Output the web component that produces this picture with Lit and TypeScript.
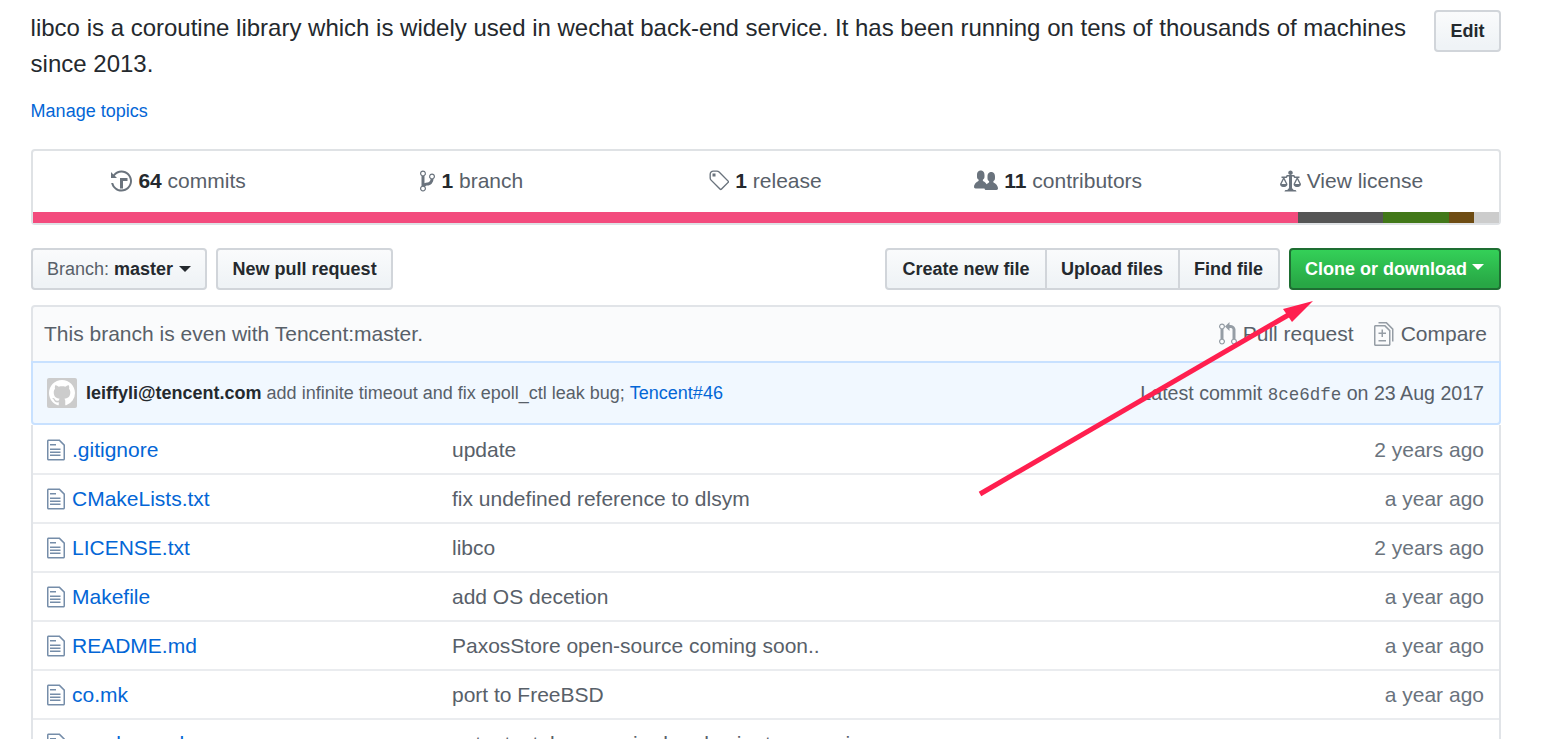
import { LitElement, html, css, svg } from 'lit'
import { customElement } from 'lit/decorators.js'

const octicon = (vb: string, w: number, h: number, d: string, cls = 'ic') =>
	html`<svg class=${cls} viewBox=${vb} width=${w} height=${h} aria-hidden="true"><path fill-rule="evenodd" d=${d} /></svg>`

const HISTORY = 'M8 13H6V6h5v2H8v5zM7 1C4.81 1 2.87 2.02 1.59 3.59L0 2v4h4L2.5 4.5C3.55 3.17 5.17 2.3 7 2.3c3.14 0 5.7 2.56 5.7 5.7s-2.56 5.7-5.7 5.7A5.71 5.71 0 0 1 1.45 9.3H.12C.75 12.55 3.6 15 7 15c3.86 0 7-3.14 7-7s-3.14-7-7-7z'
const BRANCH = 'M10 5c0-1.11-.89-2-2-2a1.993 1.993 0 0 0-1 3.72v.3c-.02.52-.23.98-.63 1.38-.4.4-.86.61-1.38.63-.83.02-1.48.16-2 .45V4.72a1.993 1.993 0 0 0-1-3.72C.88 1 0 1.89 0 3a2 2 0 0 0 1 1.72v6.56c-.59.35-1 .99-1 1.72 0 1.11.89 2 2 2 1.11 0 2-.89 2-2 0-.53-.2-1-.53-1.36.09-.06.48-.41.59-.47.25-.11.56-.17.94-.17 1.05-.05 1.95-.45 2.75-1.25S8.95 7.77 9 6.73h-.02C9.59 6.37 10 5.73 10 5zM2 1.8c.66 0 1.2.55 1.2 1.2 0 .65-.55 1.2-1.2 1.2C1.35 4.2.8 3.65.8 3c0-.65.55-1.2 1.2-1.2zm0 12.41c-.66 0-1.2-.55-1.2-1.2 0-.65.55-1.2 1.2-1.2.65 0 1.2.55 1.2 1.2 0 .65-.55 1.2-1.2 1.2zm6-8c-.66 0-1.2-.55-1.2-1.2 0-.65.55-1.2 1.2-1.2.65 0 1.2.55 1.2 1.2 0 .65-.55 1.2-1.2 1.2z'
const TAG = 'M7.73 1.73C7.26 1.26 6.62 1 5.96 1H3.5C2.13 1 1 2.13 1 3.5v2.47c0 .66.27 1.3.73 1.77l6.06 6.06c.39.39 1.02.39 1.41 0l4.59-4.59a.996.996 0 0 0 0-1.41L7.73 1.73zM2.38 7.09c-.31-.3-.47-.7-.47-1.13V3.5c0-.88.72-1.59 1.59-1.59h2.47c.42 0 .83.16 1.13.47l6.14 6.13-4.73 4.73-6.13-6.15zM3.01 3h2v2H3V3h.01z'
const PEOPLE = 'M16 12.999c0 .439-.45 1-1 1H7.995c-.539 0-.994-.447-.995-.999H1c-.54 0-1-.561-1-1 0-2.634 3-4 3-4s.229-.409 0-1c-.841-.621-1.058-.59-1-3 .058-2.419 1.367-3 2.5-3s2.442.58 2.5 3c.058 2.41-.159 2.379-1 3-.229.59 0 1 0 1s1.549.711 2.42 2.088C9.196 9.369 10 8.999 10 8.999s.229-.409 0-1c-.841-.62-1.058-.59-1-3 .058-2.419 1.367-3 2.5-3s2.437.581 2.495 3c.059 2.41-.158 2.38-1 3-.229.59 0 1 0 1s3.005 1.366 3.005 4z'
const LAW = 'M7 4c-.83 0-1.5-.67-1.5-1.5S6.17 1 7 1s1.5.67 1.5 1.5S7.83 4 7 4zm7 6c0 1.11-.89 2-2 2h-1c-1.11 0-2-.89-2-2l2-4h-1c-.55 0-1-.45-1-1H8v8c.42 0 1 .45 1 1h1c.42 0 1 .45 1 1H3c0-.55.58-1 1-1h1c0-.55.58-1 1-1h.03L6 5H5c0 .55-.45 1-1 1H3l2 4c0 1.11-.89 2-2 2H2c-1.11 0-2-.89-2-2l2-4H1V5h3c0-.55.45-1 1-1h4c.55 0 1 .45 1 1h3v1h-1l2 4zM2.5 7L1 10h3L2.5 7zM13 10l-1.5-3-1.5 3h3z'
const PR = 'M11 11.28V5c-.03-.78-.34-1.47-.94-2.06C9.46 2.35 8.78 2.03 8 2H7V0L4 3l3 3V4h1c.27.02.48.11.69.31.21.2.3.42.31.69v6.28A1.993 1.993 0 0 0 10 15a1.993 1.993 0 0 0 1-3.72zm-1 2.92c-.66 0-1.2-.55-1.2-1.2 0-.65.55-1.2 1.2-1.2.65 0 1.2.55 1.2 1.2 0 .65-.55 1.2-1.2 1.2zM4 3c0-1.11-.89-2-2-2a1.993 1.993 0 0 0-1 3.72v6.56A1.993 1.993 0 0 0 2 15a1.993 1.993 0 0 0 1-3.72V4.72c.59-.34 1-.98 1-1.72zm-.8 10c0 .66-.55 1.2-1.2 1.2-.65 0-1.2-.55-1.2-1.2 0-.65.55-1.2 1.2-1.2.65 0 1.2.55 1.2 1.2zM2 4.2C1.34 4.2.8 3.65.8 3c0-.65.55-1.2 1.2-1.2.65 0 1.2.55 1.2 1.2 0 .65-.55 1.2-1.2 1.2z'
const DIFF = 'M6 7h2v1H6v2H5V8H3V7h2V5h1v2zm-3 6h5v-1H3v1zM7.5 2L11 5.5V15c0 .55-.45 1-1 1H1c-.55 0-1-.45-1-1V3c0-.55.45-1 1-1h6.5zM10 6L7 3H1v12h9V6zM8.5 0H3v1h5l4 4v8h1V4.5L8.5 0z'
const FILE = 'M6 5H2V4h4v1zM2 8h7V7H2v1zm0 2h7V9H2v1zm0 2h7v-1H2v1zm10-7.5V14c0 .55-.45 1-1 1H1c-.55 0-1-.45-1-1V2c0-.55.45-1 1-1h7.5L12 4.5zM11 5L8 2H1v12h10V5z'
const MARK = 'M8 0C3.58 0 0 3.58 0 8c0 3.54 2.29 6.53 5.47 7.59.4.07.55-.17.55-.38 0-.19-.01-.82-.01-1.49-2.01.37-2.53-.49-2.69-.94-.09-.23-.48-.94-.82-1.13-.28-.15-.68-.52-.01-.53.63-.01 1.08.58 1.23.82.72 1.21 1.87.87 2.33.66.07-.52.28-.87.51-1.07-1.78-.2-3.64-.89-3.64-3.95 0-.87.31-1.59.82-2.15-.08-.2-.36-1.02.08-2.12 0 0 .67-.21 2.2.82.64-.18 1.32-.27 2-.27.68 0 1.36.09 2 .27 1.53-1.04 2.2-.82 2.2-.82.44 1.1.16 1.92.08 2.12.51.56.82 1.27.82 2.15 0 3.07-1.87 3.75-3.65 3.95.29.25.54.73.54 1.48 0 1.07-.01 1.93-.01 2.2 0 .21.15.46.55.38A8.013 8.013 0 0 0 16 8c0-4.42-3.58-8-8-8z'

const FILES = [
	['.gitignore', 'update', '2 years ago'],
	['CMakeLists.txt', 'fix undefined reference to dlsym', 'a year ago'],
	['LICENSE.txt', 'libco', '2 years ago'],
	['Makefile', 'add OS decetion', 'a year ago'],
	['README.md', 'PaxosStore open-source coming soon..', 'a year ago'],
	['co.mk', 'port to FreeBSD', 'a year ago'],
	['co_closure.h', 'auto_test, bug repaired and spin_top_version', 'a year ago'],
]

@customElement('app-root')
export class AppRoot extends LitElement {
	static styles = css`
		:host {
			display: block;
			position: relative;
			height: 739px;
			overflow: hidden;
			background: #fff;
			color: #24292e;
			font-family: 'Liberation Sans', Arial, sans-serif;
			font-size: 21px;
		}
		a { color: #0366d6; text-decoration: none; }
		.page { width: 1470px; margin-left: 31px; }
		.desc { display: flex; justify-content: space-between; align-items: flex-start; padding-top: 10px; }
		.desc p { margin: 0 0 0 -0.4px; width: 1380px; font-size: 24px; line-height: 36px; }
		.btn {
			display: inline-flex;
			align-items: center;
			height: 42px;
			box-sizing: border-box;
			padding: 0 14.5px;
			border: 2px solid #d1d5da;
			border-radius: 4px;
			background: linear-gradient(#fafbfc, #eff3f6 90%);
			color: #24292e;
			font-size: 18px;
			font-weight: 700;
			white-space: nowrap;
		}
		.topics { display: block; margin: 16px 0 0 -0.4px; font-size: 18px; line-height: 27px; }
		.summary { margin-top: 24px; border: 2px solid #dfe2e5; border-radius: 4px; }
		.stats { display: flex; height: 61px; }
		.stats a { flex: 1; display: flex; justify-content: center; align-items: center; gap: 6px; padding: 0 2px 1px 0; color: #586069; }
		.stats b { color: #24292e; }
		.ic { fill: #6a737d; flex: none; }
		.bar { display: flex; height: 11px; }
		.bar i { display: block; height: 100%; }
		.toolbar { display: flex; align-items: center; gap: 9px; margin-top: 23px; }
		.grow { flex: 1; }
		.lbl { font-weight: 400; color: #586069; margin-right: 5px; }
		.caret { width: 0; height: 0; margin-left: 6px; border: 6px solid transparent; border-top-color: currentColor; border-bottom: 0; }
		.btn.branch { padding: 0 14px; }
		.group { display: flex; }
		.group .btn { border-radius: 0; margin-left: -2px; padding: 0 15px 0 14px; }
		.group .btn:first-child { border-radius: 4px 0 0 4px; margin-left: 0; padding: 0 15.5px 0 15px; }
		.group .btn:last-child { border-radius: 0 4px 4px 0; }
		.btn.green {
			padding: 0 15px 0 14px;
			color: #fff;
			border-color: #1e6e32;
			background: linear-gradient(#34d058, #28a745 90%);
		}
		.green .caret { margin-left: 5px; margin-top: -4px; }
		.compare {
			display: flex;
			align-items: center;
			height: 54px;
			margin-top: 15px;
			padding: 0 12px 0 11px;
			border: 2px solid #e1e4e8;
			border-bottom: 0;
			border-radius: 4px 4px 0 0;
			background: #fafbfc;
			color: #586069;
		}
		.compare a { display: flex; align-items: center; gap: 6px; color: #586069; margin-left: 20px; }
		.compare .ic { fill: #959da5; }
		.commit {
			display: flex;
			align-items: center;
			height: 64px;
			box-sizing: border-box;
			padding: 0 15px 0 14px;
			border: 2px solid #c8e1ff;
			border-radius: 0 0 4px 4px;
			background: #f1f8ff;
			font-size: 18px;
			color: #586069;
		}
		.avatar { display: flex; align-items: center; justify-content: center; width: 30px; height: 30px; border-radius: 2px; background: #ccc; margin-right: 9px; }
		.avatar svg { fill: #fff; }
		.commit b { color: #24292e; margin-right: 5px; }
		.commit a { margin-left: 5px; }
		.latest { font-size: 19.6px; }
		.mono { font-family: 'Liberation Mono', monospace; font-size: 17.5px; }
		.files { padding-top: 1px; border-left: 2px solid #e1e4e8; border-right: 2px solid #e1e4e8; }
		.row { display: flex; align-items: center; height: 49px; box-sizing: border-box; border-bottom: 2px solid #eaecef; padding: 0 15px 0 14px; }
		.row .ic { fill: rgba(3, 47, 98, 0.55); margin-right: 7px; }
		.name { width: 380px; }
		.msg { flex: 1; color: #586069; }
		.age { color: #6a737d; }
		.arrow { position: absolute; left: 0; top: 0; pointer-events: none; }
	`

	render() {
		return html`
			<div class="page">
				<div class="desc">
					<p>libco is a coroutine library which is widely used in wechat back-end service. It has been running on tens of thousands of machines since 2013.</p>
					<a class="btn">Edit</a>
				</div>
				<a class="topics">Manage topics</a>
				<div class="summary">
					<div class="stats">
						<a>${octicon('0 0 14 16', 21, 24, HISTORY)}<span><b>64</b> commits</span></a>
						<a>${octicon('0 0 10 16', 15, 24, BRANCH)}<span><b>1</b> branch</span></a>
						<a>${octicon('0 0 14 16', 21, 24, TAG)}<span><b>1</b> release</span></a>
						<a>${octicon('0 0 16 16', 24, 24, PEOPLE)}<span><b>11</b> contributors</span></a>
						<a>${octicon('0 0 14 16', 21, 24, LAW)}<span>View license</span></a>
					</div>
					<div class="bar">
						<i style="width:86.3%;background:#f34b7d"></i>
						<i style="width:5.8%;background:#555555"></i>
						<i style="width:4.5%;background:#427819"></i>
						<i style="width:1.7%;background:#6e4c13"></i>
						<i style="width:1.7%;background:#ccc"></i>
					</div>
				</div>
				<div class="toolbar">
					<a class="btn branch"><span class="lbl">Branch:</span>master<span class="caret"></span></a>
					<a class="btn">New pull request</a>
					<div class="grow"></div>
					<div class="group">
						<a class="btn">Create new file</a>
						<a class="btn">Upload files</a>
						<a class="btn">Find file</a>
					</div>
					<a class="btn green">Clone or download<span class="caret"></span></a>
				</div>
				<div class="compare">
					<span class="grow">This branch is even with Tencent:master.</span>
					<a>${octicon('0 0 12 16', 18, 24, PR)}Pull request</a>
					<a>${octicon('0 0 14 16', 21, 24, DIFF)}Compare</a>
				</div>
				<div class="commit">
					<span class="avatar">${octicon('0 0 16 16', 26, 26, MARK, '')}</span>
					<b>leiffyli@tencent.com</b> add infinite timeout and fix epoll_ctl leak bug;
					<a>Tencent#46</a>
					<span class="grow"></span>
					<span class="latest">Latest commit <span class="mono">8ce6dfe</span> on 23 Aug 2017</span>
				</div>
				<div class="files">
					${FILES.map(
						([n, m, a]) => html`<div class="row">
							${octicon('0 0 12 16', 18, 24, FILE)}
							<a class="name">${n}</a>
							<span class="msg">${m}</span>
							<span class="age">${a}</span>
						</div>`,
					)}
				</div>
			</div>
			<svg class="arrow" width="1545" height="739" aria-hidden="true">
				${svg`<line x1="980" y1="494" x2="1290" y2="314" stroke="#ff1f4f" stroke-width="5" />
				<polygon points="1313,301 1283,309 1292,322" fill="#ff1f4f" />`}
			</svg>
		`
	}
}
